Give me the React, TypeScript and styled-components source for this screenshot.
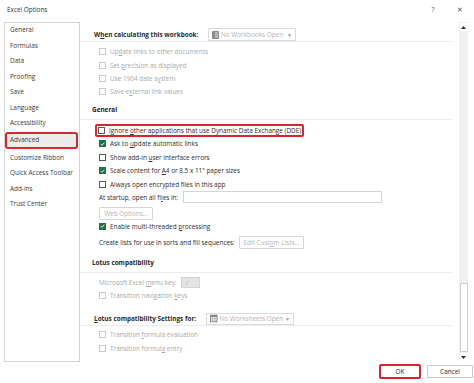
import React from "react";
import styled, { createGlobalStyle } from "styled-components";

const GlobalStyle = createGlobalStyle`
  html, body {
    margin: 0;
    padding: 0;
    background: #ffffff;
  }
  body {
    font-family: "Open Sans", "Noto Sans", sans-serif;
  }
`;

const Window = styled.div`
  width: 474px;
  height: 383px;
  display: flex;
  flex-direction: column;
  background: #fff;
  overflow: hidden;
  color: #2b2b2b;
  font-size: 6.4px;
`;

const TitleBar = styled.div`
  height: 18px;
  display: flex;
  align-items: center;
  padding-left: 7px;
  margin-bottom: 4px;
  color: #333;
`;

const Title = styled.span`
  flex: 1;
`;

const TitleButton = styled.span<{ $w: number }>`
  width: ${(p) => p.$w}px;
  text-align: center;
  color: #555;
  font-size: 7px;
`;

const Body = styled.div`
  height: 340px;
  display: flex;
`;

const Nav = styled.div`
  width: 76px;
  margin-left: 4px;
  box-sizing: border-box;
  border: 1px solid #d4d4d4;
  height: 340px;
`;

const NavItem = styled.div<{ $selected?: boolean }>`
  height: ${(p) => (p.$selected ? 16.5 : 15.5)}px;
  box-sizing: border-box;
  padding: ${(p) => (p.$selected ? "3px 0 0 5px" : "2px 0 0 5px")};
  line-height: 9px;
  color: #3a3a3a;
  white-space: nowrap;
  margin-right: ${(p) => (p.$selected ? 1 : 0)}px;
  margin-top: ${(p) => (p.$selected ? 0.5 : 0)}px;
  margin-bottom: ${(p) => (p.$selected ? 2 : 0)}px;
  background: ${(p) => (p.$selected ? "#ececec" : "transparent")};
  box-shadow: ${(p) => (p.$selected ? "inset 0 0 0 2px #d7262e" : "none")};
  border-radius: ${(p) => (p.$selected ? 3 : 0)}px;
`;

const Content = styled.div`
  flex: 1;
  padding-top: 6px;
  box-sizing: border-box;
  padding-right: 7px;
`;

const Heading = styled.div<{ $mt: number }>`
  margin-top: ${(p) => p.$mt}px;
  padding-left: 12px;
  line-height: 14px;
  height: 16px;
  font-weight: 700;
  color: #262626;
  border-bottom: 1px solid #ececec;
`;

const SelectHeading = styled.div<{ $mt: number }>`
  margin-top: ${(p) => p.$mt}px;
  padding-left: 14px;
  height: 13px;
  display: flex;
  align-items: center;
  font-weight: 700;
  color: #262626;
  border-bottom: 1px solid #ececec;
`;

const Label = styled.span<{ $w?: number; $disabled?: boolean }>`
  display: inline-block;
  width: ${(p) => (p.$w ? `${p.$w}px` : "auto")};
  flex-shrink: 0;
  color: ${(p) => (p.$disabled ? "#a9a9a9" : "#2b2b2b")};
  white-space: nowrap;
`;

const Select = styled.div<{ $w: number }>`
  width: ${(p) => p.$w}px;
  height: 12.5px;
  box-sizing: border-box;
  border: 1px solid #dcdcdc;
  display: flex;
  align-items: center;
  padding: 0 3px;
  gap: 2px;
  font-weight: 400;
  color: #b4b4b4;
`;

const SelectText = styled.span`
  flex: 1;
  white-space: nowrap;
`;

const Caret = styled.span`
  font-size: 5px;
  color: #9a9a9a;
`;

const Row = styled.div<{ $mt?: number; $h?: number }>`
  display: flex;
  align-items: center;
  height: ${(p) => p.$h ?? 13.4}px;
  margin-top: ${(p) => p.$mt ?? 0}px;
  padding-left: 19px;
`;

const Box = styled.span<{ $checked?: boolean; $disabled?: boolean }>`
  width: 7px;
  height: 7px;
  box-sizing: border-box;
  flex-shrink: 0;
  margin-right: 4px;
  border: 1px solid
    ${(p) => (p.$checked ? "#217346" : p.$disabled ? "#c9c9c9" : "#5a5a5a")};
  background: ${(p) => (p.$checked ? "#217346" : "#fff")};
  display: flex;
  align-items: center;
  justify-content: center;
`;

const Highlight = styled.span`
  display: flex;
  align-items: center;
  height: 13px;
  box-sizing: border-box;
  margin-left: -4px;
  padding: 0 1px 0 1px;
  border: 2px solid #d7262e;
  border-radius: 2px;
`;

const TextInput = styled.div<{ $w: number; $grey?: boolean }>`
  width: ${(p) => p.$w}px;
  height: ${(p) => (p.$grey ? 11.5 : 12)}px;
  box-sizing: border-box;
  border: 1px solid #d4d4d4;
  background: ${(p) => (p.$grey ? "#e4e4e4" : "#fff")};
  color: #b0b0b0;
  display: flex;
  align-items: center;
  padding-left: 4px;
`;

const Button = styled.div<{ $w: number; $disabled?: boolean }>`
  width: ${(p) => p.$w}px;
  height: 13px;
  box-sizing: border-box;
  border: 1px solid #d6d6d6;
  border-radius: 1px;
  display: flex;
  align-items: center;
  justify-content: center;
  color: ${(p) => (p.$disabled ? "#b5b5b5" : "#2b2b2b")};
  background: #fff;
  white-space: nowrap;
`;

const Scrollbar = styled.div`
  width: 9px;
  height: 339px;
  margin-right: 6px;
  background: #f0f0f0;
  display: flex;
  flex-direction: column;
  align-items: center;
`;

const Arrow = styled.div`
  width: 8px;
  height: 8px;
  margin-top: 1px;
  background: #fff;
  display: flex;
  align-items: center;
  justify-content: center;
`;

const Thumb = styled.div`
  width: 8px;
  height: 69px;
  box-sizing: border-box;
  margin-top: 252px;
  border: 1px solid #cfcfcf;
  background: #fff;
`;

const Footer = styled.div`
  flex: 1;
  display: flex;
  justify-content: flex-end;
  align-items: flex-start;
  padding-top: 1px;
  padding-right: 1px;
  gap: 6px;
`;

const OkFrame = styled.div`
  width: 42px;
  height: 15px;
  box-sizing: border-box;
  border: 2px solid #d7262e;
  border-radius: 2px;
  display: flex;
  align-items: center;
  justify-content: center;
  margin-top: 0.5px;
`;

const FooterButton = styled.div<{ $w: number }>`
  width: ${(p) => p.$w}px;
  height: 12.5px;
  box-sizing: border-box;
  border: 1px solid #c9c9c9;
  margin-top: 2px;
  display: flex;
  align-items: center;
  justify-content: center;
  color: #2b2b2b;
`;

const Check = () => (
  <svg width="6" height="6" viewBox="0 0 10 10">
    <path d="M1.6 5.2 L4 7.6 L8.6 2.4" stroke="#fff" strokeWidth="1.7" fill="none" />
  </svg>
);

const BookIcon = () => (
  <svg width="7" height="8" viewBox="0 0 7 8">
    <rect x="0" y="0" width="7" height="8" rx="1" fill="#8c8c8c" />
    <rect x="3" y="1" width="3" height="6" fill="#b8b8b8" />
  </svg>
);

const SheetIcon = () => (
  <svg width="9" height="9" viewBox="0 0 9 9">
    <rect x="0.5" y="0.5" width="8" height="8" fill="#fff" stroke="#777" />
    <rect x="0.5" y="0.5" width="8" height="2" fill="#777" />
    <path d="M0.5 4.5 H8.5 M0.5 6.5 H8.5 M3.2 2.5 V8.5 M5.8 2.5 V8.5" stroke="#999" strokeWidth="0.7" />
  </svg>
);

type Opt = { text: React.ReactNode; checked?: boolean; disabled?: boolean };

const Option: React.FC<Opt & { mt?: number }> = ({ text, checked, disabled, mt }) => (
  <Row $mt={mt}>
    <Box $checked={checked} $disabled={disabled}>
      {checked && <Check />}
    </Box>
    <Label $disabled={disabled}>{text}</Label>
  </Row>
);

const navItems = [
  "General",
  "Formulas",
  "Data",
  "Proofing",
  "Save",
  "Language",
  "Accessibility",
  "Advanced",
  "Customize Ribbon",
  "Quick Access Toolbar",
  "Add-ins",
  "Trust Center",
];

const App: React.FC = () => {
  return (
    <Window>
      <GlobalStyle />
      <TitleBar>
        <Title>Excel Options</Title>
        <TitleButton $w={26}>?</TitleButton>
        <TitleButton $w={28}>✕</TitleButton>
      </TitleBar>
      <Body>
        <Nav>
          {navItems.map((item) => (
            <NavItem key={item} $selected={item === "Advanced"}>
              {item}
            </NavItem>
          ))}
        </Nav>
        <Content>
          <SelectHeading $mt={0}>
            <Label $w={114}>
              W<u>h</u>en calculating this workbook:
            </Label>
            <Select $w={88}>
              <BookIcon />
              <SelectText>No Workbooks Open</SelectText>
              <Caret>▼</Caret>
            </Select>
          </SelectHeading>
          <Option mt={3} disabled text={<>Up<u>d</u>ate links to other documents</>} />
          <Option disabled text={<>Set <u>p</u>recision as displayed</>} />
          <Option disabled text={<>Use 1904 date s<u>y</u>stem</>} />
          <Option disabled text={<>Save e<u>x</u>ternal link values</>} />

          <Heading $mt={4.7}>General</Heading>
          <Row $mt={3.6}>
            <Highlight>
              <Box />
              <Label>
                Ignore <u>o</u>ther applications that use Dynamic Data Exchange (DDE)
              </Label>
            </Highlight>
          </Row>
          <Option checked text={<>Ask to <u>u</u>pdate automatic links</>} />
          <Option text={<>Show add-in <u>u</u>ser interface errors</>} />
          <Option checked text={<>Scale content for <u>A</u>4 or 8.5 x 11" paper sizes</>} />
          <Option text="Always open encrypted files in this app" />
          <Row>
            <Label $w={84}>
              At startup, open all fi<u>l</u>es in:
            </Label>
            <TextInput $w={199} />
          </Row>
          <Row $mt={2.5} $h={13}>
            <Button $w={54} $disabled>
              Web Options...
            </Button>
          </Row>
          <Option checked text={<>Enable multi-threaded <u>p</u>rocessing</>} />
          <Row $mt={2.9} $h={14}>
            <Label $w={140}>Create lists for use in sorts and fill sequences:</Label>
            <Button $w={65} $disabled>
              Edit Cust<u>o</u>m Lists...
            </Button>
          </Row>

          <Heading $mt={6}>Lotus compatibility</Heading>
          <Row $mt={3.4} $h={12}>
            <Label $w={82} $disabled>
              Microsoft Excel <u>m</u>enu key:
            </Label>
            <TextInput $w={19} $grey>
              /
            </TextInput>
          </Row>
          <Option mt={0.6} disabled text={<>Transition navigation <u>k</u>eys</>} />

          <SelectHeading $mt={10.1}>
            <Label $w={112}>
              <u>L</u>otus compatibility Settings for:
            </Label>
            <Select $w={88}>
              <SheetIcon />
              <SelectText>No Worksheets Open</SelectText>
              <Caret>▼</Caret>
            </Select>
          </SelectHeading>
          <Option mt={1.5} disabled text={<>Transition <u>f</u>ormula evaluation</>} />
          <Option disabled text={<>Transition formul<u>a</u> entry</>} />
        </Content>
        <Scrollbar>
          <Arrow>
            <svg width="5" height="3" viewBox="0 0 5 3">
              <path d="M0 3 L2.5 0 L5 3 Z" fill="#333" />
            </svg>
          </Arrow>
          <Thumb />
          <Arrow>
            <svg width="5" height="3" viewBox="0 0 5 3">
              <path d="M0 0 L2.5 3 L5 0 Z" fill="#333" />
            </svg>
          </Arrow>
        </Scrollbar>
      </Body>
      <Footer>
        <OkFrame>OK</OkFrame>
        <FooterButton $w={46}>Cancel</FooterButton>
      </Footer>
    </Window>
  );
};

export default App;
